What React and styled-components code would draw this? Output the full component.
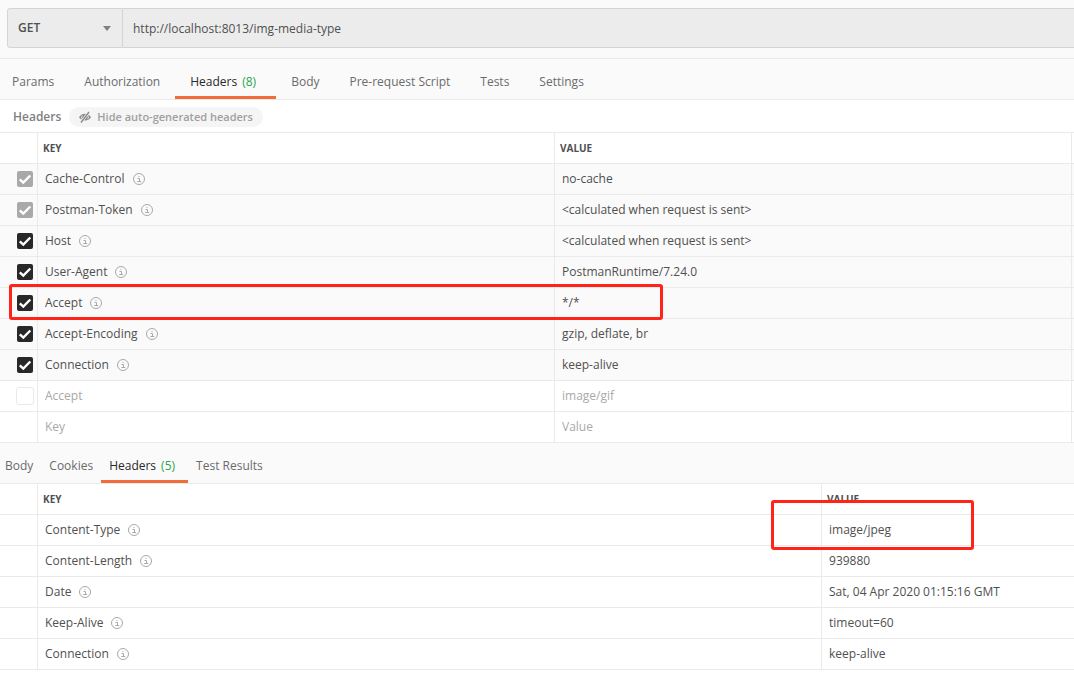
import { useState } from "react";
import styled, { createGlobalStyle } from "styled-components";

const requestTabs = [
  { name: "Params" },
  { name: "Authorization" },
  { name: "Headers", count: 8 },
  { name: "Body" },
  { name: "Pre-request Script" },
  { name: "Tests" },
  { name: "Settings" },
];

const responseTabs = [
  { name: "Body" },
  { name: "Cookies" },
  { name: "Headers", count: 5 },
  { name: "Test Results" },
];

const requestHeaders = [
  { id: 1, name: "Cache-Control", value: "no-cache", auto: true, checked: true, locked: true },
  { id: 2, name: "Postman-Token", value: "<calculated when request is sent>", auto: true, checked: true, locked: true },
  { id: 3, name: "Host", value: "<calculated when request is sent>", auto: true, checked: true },
  { id: 4, name: "User-Agent", value: "PostmanRuntime/7.24.0", auto: true, checked: true },
  { id: 5, name: "Accept", value: "*/*", auto: true, checked: true },
  { id: 6, name: "Accept-Encoding", value: "gzip, deflate, br", auto: true, checked: true },
  { id: 7, name: "Connection", value: "keep-alive", auto: true, checked: true },
  { id: 8, name: "Accept", value: "image/gif", auto: false, checked: false },
];

const responseHeaders = [
  { name: "Content-Type", value: "image/jpeg" },
  { name: "Content-Length", value: "939880" },
  { name: "Date", value: "Sat, 04 Apr 2020 01:15:16 GMT" },
  { name: "Keep-Alive", value: "timeout=60" },
  { name: "Connection", value: "keep-alive" },
];

function InfoIcon() {
  return (
    <Info viewBox="0 0 12 12" aria-hidden="true">
      <circle cx="6" cy="6" r="5.5" />
      <path d="M4.5 5.5h2v3M4.3 8.5h3.900M5.500 3.500h1" />
    </Info>
  );
}

function HiddenEyeIcon() {
  return (
    <svg width="12" height="12" viewBox="0 0 12 12" aria-hidden="true">
      <path
        d="M0 6.3C1.5 3.8 3.5 2.7 6 2.7S10.5 3.8 12 6.3C10.5 8.7 8.5 9.6 6 9.6S1.5 8.7 0 6.3z"
        fill="#8c8c8c"
      />
      <path d="M3.2 4.3Q2 6.3 3.1 8.2M8.8 4.2Q10 6.2 8.8 8.2" fill="none" stroke="#f5f5f5" strokeWidth="0.8" />
      <path d="M10.5 0.5L1.800 11.500" stroke="#f5f5f5" strokeWidth="2.8" />
      <path d="M10 1L2 11.5" stroke="#8c8c8c" strokeWidth="1.4" />
    </svg>
  );
}

function Tabs({ items, label, compact }) {
  const [active, setActive] = useState("Headers");
  return (
    <TabBar role="tablist" aria-label={label}>
      {items.map((tab) => (
        <Tab
          key={tab.name}
          role="tab"
          aria-selected={active === tab.name}
          $active={active === tab.name}
          $compact={compact}
          onClick={() => setActive(tab.name)}
        >
          {tab.name}
          {tab.count && <Count>({tab.count})</Count>}
        </Tab>
      ))}
    </TabBar>
  );
}

function RequestRow({ header }) {
  const [checked, setChecked] = useState(header.checked);
  return (
    <Row $auto={header.auto} $muted={!checked}>
      <Cell $check>
        <CheckLabel>
          <CheckInput
            type="checkbox"
            aria-label={header.name}
            checked={checked}
            disabled={header.locked}
            onChange={() => setChecked(!checked)}
          />
          {checked && (
            <Tick viewBox="0 0 16 16" aria-hidden="true">
              <path d="M2.800 8.300L6.300 11.600L13.300 4.500" />
            </Tick>
          )}
        </CheckLabel>
      </Cell>
      <Cell>
        <KeyName>
          {header.name}
          {header.auto && <InfoIcon />}
        </KeyName>
      </Cell>
      <Cell>{header.value}</Cell>
      <Cell $last />
    </Row>
  );
}

export default function App() {
  return (
    <>
      <GlobalStyle />
      <UrlBar>
        <MethodBox>
          <Method aria-label="Method" defaultValue="GET">
            <option>GET</option>
            <option>POST</option>
          </Method>
          <Caret viewBox="0 0 8 5" aria-hidden="true">
            <path d="M0 0h8L4 5z" />
          </Caret>
        </MethodBox>
        <Url aria-label="Request URL" defaultValue="http://localhost:8013/img-media-type" />
      </UrlBar>
      <Tabs items={requestTabs} label="Request" />
      <SectionBar>
        <SectionTitle>Headers</SectionTitle>
        <HideButton>
          <HiddenEyeIcon />
          Hide auto-generated headers
        </HideButton>
      </SectionBar>
      <TableArea>
        <Table>
          <colgroup>
            <Col $width="38px" />
            <Col />
            <Col />
            <Col $width="2px" />
          </colgroup>
          <thead>
            <Row>
              <HeadCell />
              <HeadCell scope="col">KEY</HeadCell>
              <HeadCell scope="col">VALUE</HeadCell>
              <HeadCell $last />
            </Row>
          </thead>
          <tbody>
            {requestHeaders.map((header) => (
              <RequestRow key={header.id} header={header} />
            ))}
            <Row>
              <Cell />
              <Cell>
                <CellInput aria-label="New header key" placeholder="Key" />
              </Cell>
              <Cell>
                <CellInput aria-label="New header value" placeholder="Value" />
              </Cell>
              <Cell $last />
            </Row>
          </tbody>
        </Table>
        <Highlight $left={9} $top={151} $width={654} $height={36} />
      </TableArea>
      <Tabs items={responseTabs} label="Response" compact />
      <TableArea>
        <Table>
          <colgroup>
            <Col $width="38px" />
            <Col $width="73%" />
            <Col />
          </colgroup>
          <thead>
            <Row>
              <HeadCell />
              <HeadCell scope="col">KEY</HeadCell>
              <HeadCell scope="col" $last>VALUE</HeadCell>
            </Row>
          </thead>
          <tbody>
            {responseHeaders.map((header) => (
              <Row key={header.name}>
                <Cell />
                <Cell>
                  <KeyName>
                    {header.name}
                    <InfoIcon />
                  </KeyName>
                </Cell>
                <Cell $last>{header.value}</Cell>
              </Row>
            ))}
          </tbody>
        </Table>
        <Highlight $left={771} $top={16} $width={203} $height={50} />
      </TableArea>
    </>
  );
}

const GlobalStyle = createGlobalStyle`
  * {
    box-sizing: border-box;
  }
  body {
    margin: 0;
    background-color: #ffffff;
    color: #505050;
    font-family: "Open Sans", sans-serif;
    font-size: 12px;
    line-height: 18px;
  }
  button, input, select {
    font: inherit;
    color: inherit;
  }
`

const UrlBar = styled.div`
  display: flex;
  padding: 8px 0 10px 7px;
  background-color: #fafafa;
  border-bottom: 1px solid #eaeaea;
`

const MethodBox = styled.div`
  position: relative;
  display: flex;
  align-items: center;
`

const Method = styled.select`
  appearance: none;
  width: 116px;
  height: 40px;
  padding: 0 10px;
  background-color: #ececec;
  border: 1px solid #d4d4d4;
  border-radius: 3px 0 0 3px;
  font-weight: 600;
`

const Caret = styled.svg`
  position: absolute;
  right: 12px;
  width: 8px;
  height: 5px;
  fill: #808080;
  pointer-events: none;
`

const Url = styled.input`
  flex: 1;
  min-width: 0;
  height: 40px;
  padding: 0 10px;
  background-color: #ececec;
  border: solid #d4d4d4;
  border-width: 1px 0;
  border-radius: 0;
`

const TabBar = styled.div`
  display: flex;
  height: 41px;
  background-color: #fafafa;
  border-bottom: 1px solid #eaeaea;
`

const Tab = styled.button`
  padding: ${(props) => (props.$compact ? "8px 8px 0" : "8px 15px 0")};
  background: none;
  border: none;
  border-bottom: 3px solid ${(props) => (props.$active ? "#f26b3a" : "transparent")};
  color: ${(props) => (props.$active ? "#282828" : "#6b6b6b")};
  cursor: pointer;

  &:first-child {
    padding-left: ${(props) => (props.$compact ? "5px" : "12px")};
  }
`

const Count = styled.span`
  margin: 0 5px;
  color: #2ba44e;
`

const SectionBar = styled.div`
  display: flex;
  align-items: center;
  gap: 8px;
  height: 33px;
  padding-top: 1px;
  padding-left: 13px;
  border-bottom: 1px solid #eaeaea;
`

const SectionTitle = styled.h2`
  margin: 0;
  color: #808080;
  font-size: 12px;
  font-weight: 600;
`

const HideButton = styled.button`
  display: flex;
  align-items: center;
  gap: 6px;
  height: 20px;
  padding: 0 10px;
  background-color: #f5f5f5;
  border: none;
  border-radius: 10px;
  color: #a0a0a0;
  font-size: 11px;
  font-weight: 600;
`

const TableArea = styled.div`
  position: relative;
`

const Table = styled.table`
  width: 100%;
  table-layout: fixed;
  border-collapse: separate;
  border-spacing: 0;
`

const Col = styled.col`
  width: ${(props) => props.$width || "auto"};
`

const Row = styled.tr`
  background-color: ${(props) => (props.$auto ? "#fafafa" : "#ffffff")};
  color: ${(props) => (props.$muted ? "#a9a9a9" : "#505050")};
`

const Cell = styled.td`
  height: 31px;
  padding: ${(props) => (props.$check ? "0 0 0 16px" : props.$last && !props.children ? "0" : "0 7px")};
  border-bottom: 1px solid #eaeaea;
  border-right: ${(props) => (props.$last ? "none" : "1px solid #eaeaea")};
`

const HeadCell = styled.th`
  height: 31px;
  padding: ${(props) => (props.$last && !props.children ? "0" : "0 5px")};
  border-bottom: 1px solid #eaeaea;
  border-right: ${(props) => (props.$last ? "none" : "1px solid #eaeaea")};
  font-size: 10px;
  font-weight: 700;
  text-align: left;
`

const KeyName = styled.span`
  display: flex;
  align-items: center;
  gap: 8px;
`

const Info = styled.svg`
  width: 12px;
  height: 12px;
  fill: none;
  stroke: #a9a9a9;
`

const CheckLabel = styled.label`
  display: grid;
  width: 18px;
  height: 18px;
`

const CheckInput = styled.input`
  grid-area: 1 / 1;
  appearance: none;
  margin: 0;
  background-color: #ffffff;
  border: 1px solid #eaeaea;
  border-radius: 3px;

  &:checked {
    margin: 1px;
    background-color: #282828;
    border: none;
    border-radius: 2px;
  }

  &:checked:disabled {
    background-color: #a9a9a9;
  }
`

const Tick = styled.svg`
  grid-area: 1 / 1;
  z-index: 1;
  margin: 1px;
  fill: none;
  stroke: #ffffff;
  stroke-width: 2.4;
  pointer-events: none;
`

const CellInput = styled.input`
  display: block;
  width: 100%;
  padding: 0;
  background: none;
  border: none;

  &::placeholder {
    color: #a9a9a9;
  }
`

const Highlight = styled.div`
  position: absolute;
  left: ${(props) => props.$left}px;
  top: ${(props) => props.$top}px;
  width: ${(props) => props.$width}px;
  height: ${(props) => props.$height}px;
  border: 3px solid #ff2318;
  border-radius: 3px;
  pointer-events: none;
`
